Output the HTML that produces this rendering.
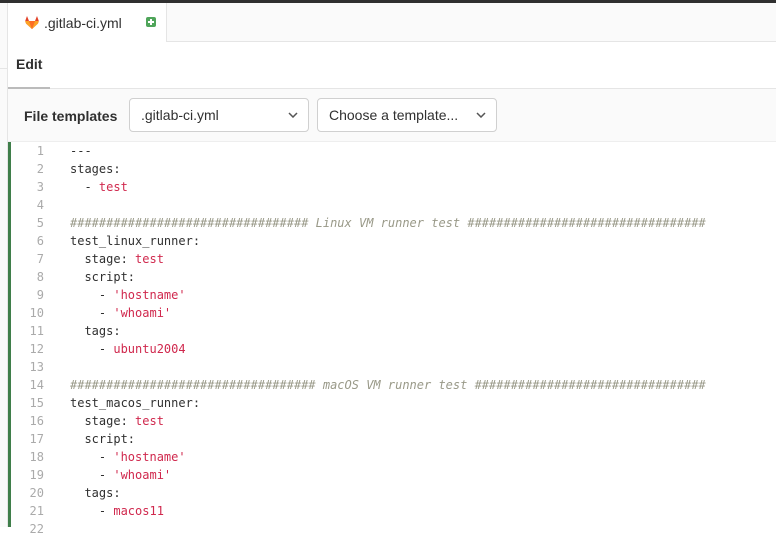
<!DOCTYPE html>
<html><head><meta charset="utf-8"><style>
*{margin:0;padding:0;box-sizing:border-box}
body{width:776px;height:527px;overflow:hidden;background:#fff;font-family:"Liberation Sans",Arial,sans-serif;position:relative;color:#333}
.top{position:absolute;left:0;top:0;width:776px;height:3px;background:#303030}
.lgray{position:absolute;left:0;top:3px;width:8px;height:524px;background:#fafafa;border-right:1px solid #e5e5e5}
.lline{position:absolute;left:0;top:68px;width:8px;height:1px;background:#e5e5e5}
.tabbar{position:absolute;left:8px;top:3px;right:0;height:39px;background:#fafafa;border-bottom:1px solid #e5e5e5}
.tab{position:absolute;left:8px;top:3px;width:159px;height:39px;background:#fff;border-right:1px solid #e5e5e5}
.tab .name{position:absolute;left:36px;top:12px;font-size:14px;color:#303030}
.plus{position:absolute;left:138px;top:14px;width:10px;height:10px;background:#4fa55a;border-radius:2px}
.plus:before{content:"";position:absolute;left:2px;top:4px;width:6px;height:2px;background:#fff}
.plus:after{content:"";position:absolute;left:4px;top:2px;width:2px;height:6px;background:#fff}
.edit{position:absolute;left:8px;top:42px;right:0;height:47px;background:#fff;border-bottom:1px solid #e5e5e5}
.edit span{position:absolute;left:8px;top:14px;font-size:14px;font-weight:bold;color:#303030}
.edit i{position:absolute;left:0;bottom:-1px;width:42px;height:2px;background:#bbb}
.tmpl{position:absolute;left:8px;top:89px;right:0;height:53px;background:#fafafa;border-bottom:1px solid #eee}
.tmpl b{position:absolute;left:16px;top:19px;font-size:14px;color:#303030}
.dd{position:absolute;top:9px;height:34px;background:#fff;border:1px solid #d0d0d0;border-radius:4px;font-size:14px;color:#303030;padding:8px 0 0 11px}
.dd svg{position:absolute;right:10px;top:13px}
.ed{position:absolute;left:8px;top:142px;right:0;bottom:0;background:#fff;border-left:3px solid #3f7e4a}
.ln{position:absolute;left:0;top:0;width:33px;text-align:right;font-family:"DejaVu Sans Mono",monospace;font-size:12px;line-height:18px;color:#aaa}
pre{position:absolute;left:59px;top:0;font-family:"DejaVu Sans Mono",monospace;font-size:12px;line-height:18px;color:#303030}
.s{color:#d0284d}.c{color:#999988;font-style:italic}
</style></head><body>
<div class="top"></div>
<div class="lgray"></div><div class="lline"></div>
<div class="tabbar"></div>
<div class="tab">
<svg style="position:absolute;left:17px;top:13px" width="14" height="13" viewBox="0 0 14 13"><path d="M7 13L1 7.5 0.2 5 2 0l2 5h6l2-5 1.8 5-0.8 2.5z" fill="#e24329"/><path d="M7 13L4 5h6z" fill="#fc6d26"/><path d="M0.2 5L4 5 7 13 1 7.5z" fill="#fca326"/><path d="M13.8 5L10 5 7 13 13 7.5z" fill="#fca326"/></svg>
<span class="name">.gitlab-ci.yml</span><span class="plus"></span></div>
<div class="edit"><span>Edit</span><i></i></div>
<div class="tmpl"><b>File templates</b>
<div class="dd" style="left:121px;width:180px">.gitlab-ci.yml<svg width="10" height="6" viewBox="0 0 10 6"><path d="M1 1l4 4 4-4" stroke="#555" stroke-width="1.5" fill="none"/></svg></div>
<div class="dd" style="left:309px;width:180px">Choose a template...<svg width="10" height="6" viewBox="0 0 10 6"><path d="M1 1l4 4 4-4" stroke="#555" stroke-width="1.5" fill="none"/></svg></div>
</div>
<div class="ed">
<div class="ln">1<br>2<br>3<br>4<br>5<br>6<br>7<br>8<br>9<br>10<br>11<br>12<br>13<br>14<br>15<br>16<br>17<br>18<br>19<br>20<br>21<br>22</div>
<pre>---
stages:
  - <span class="s">test</span>

<span class="c">################################# Linux VM runner test #################################</span>
test_linux_runner:
  stage: <span class="s">test</span>
  script:
    - <span class="s">'hostname'</span>
    - <span class="s">'whoami'</span>
  tags:
    - <span class="s">ubuntu2004</span>

<span class="c">################################## macOS VM runner test ################################</span>
test_macos_runner:
  stage: <span class="s">test</span>
  script:
    - <span class="s">'hostname'</span>
    - <span class="s">'whoami'</span>
  tags:
    - <span class="s">macos11</span>
</pre>
</div>
</body></html>
